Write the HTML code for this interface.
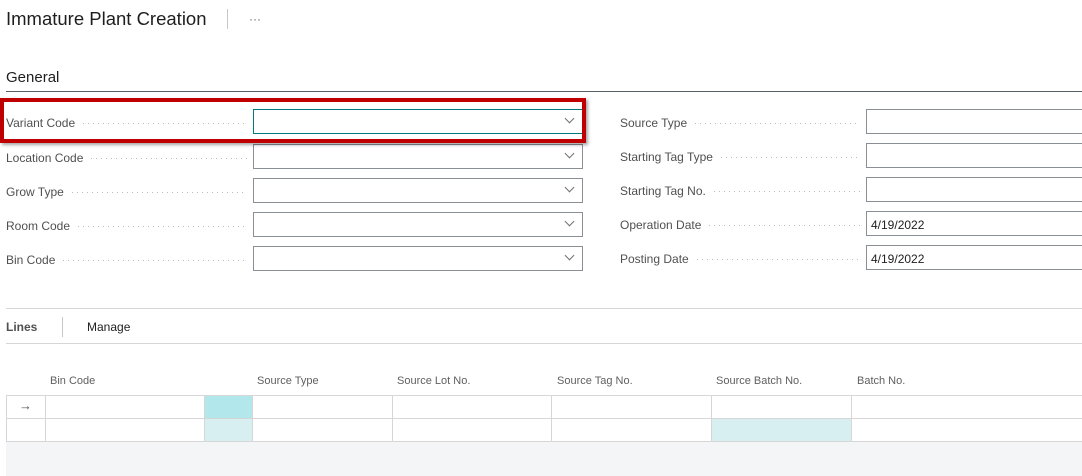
<!DOCTYPE html>
<html><head><meta charset="utf-8"><style>
*{box-sizing:border-box;margin:0;padding:0}
body{width:1082px;height:476px;overflow:hidden;background:#fff;font-family:"Liberation Sans",sans-serif;color:#212121;position:relative}
.a{position:absolute}
.title{left:6px;top:8px;font-size:18.5px;color:#1e1e1e}
.row{position:absolute;height:25px;display:flex;align-items:center;font-size:12px;color:#505050}
.row .lead{flex:1;margin:2px 6px 0 8px;height:1px;background-image:linear-gradient(to right,#bbb 1px,transparent 1px);background-size:5px 1px}
.inp{position:absolute;height:25px;border:1px solid #8a8f96;background:#fff;font-size:12px;color:#212121;padding:5px 0 0 4px}
.chev{position:absolute;right:9px;top:5px;width:7px;height:7px;border-right:1px solid #707070;border-bottom:1px solid #707070;transform:rotate(45deg)}
.th{position:absolute;top:375px;font-size:11px;color:#606060}
</style></head><body>
<div class="a title">Immature Plant Creation</div>
<div class="a" style="left:227px;top:9px;width:1px;height:20px;background:#c8c8c8"></div>
<div class="a" style="left:249px;top:12px;font-size:12px;color:#666">···</div>
<div class="a" style="left:6px;top:69px;font-size:15px;color:#1e1e1e">General</div>
<div class="a" style="left:6px;top:91px;width:1076px;height:1px;background:#5a5f66"></div>

<div class="row" style="left:6px;top:110px;width:247px">Variant Code<span class="lead"></span></div>
<div class="row" style="left:6px;top:145px;width:247px">Location Code<span class="lead"></span></div>
<div class="row" style="left:6px;top:179px;width:247px">Grow Type<span class="lead"></span></div>
<div class="row" style="left:6px;top:213px;width:247px">Room Code<span class="lead"></span></div>
<div class="row" style="left:6px;top:247px;width:247px">Bin Code<span class="lead"></span></div>
<div class="inp" style="left:253px;top:109px;width:330px;border-color:#007c80"><span class="chev"></span></div>
<div class="inp" style="left:253px;top:144px;width:330px"><span class="chev"></span></div>
<div class="inp" style="left:253px;top:178px;width:330px"><span class="chev"></span></div>
<div class="inp" style="left:253px;top:212px;width:330px"><span class="chev"></span></div>
<div class="inp" style="left:253px;top:246px;width:330px"><span class="chev"></span></div>
<div class="a" style="left:0;top:98px;width:586px;height:45px;border:4px solid #c00000;box-shadow:2px 2px 3px rgba(0,0,0,.35)"></div>

<div class="row" style="left:620px;top:110px;width:246px">Source Type<span class="lead"></span></div>
<div class="row" style="left:620px;top:144px;width:246px">Starting Tag Type<span class="lead"></span></div>
<div class="row" style="left:620px;top:178px;width:246px">Starting Tag No.<span class="lead"></span></div>
<div class="row" style="left:620px;top:212px;width:246px">Operation Date<span class="lead"></span></div>
<div class="row" style="left:620px;top:246px;width:246px">Posting Date<span class="lead"></span></div>
<div class="inp" style="left:866px;top:109px;width:230px"></div>
<div class="inp" style="left:866px;top:143px;width:230px"></div>
<div class="inp" style="left:866px;top:177px;width:230px"></div>
<div class="inp" style="left:866px;top:211px;width:230px;padding-top:6px">4/19/2022</div>
<div class="inp" style="left:866px;top:245px;width:230px;padding-top:6px">4/19/2022</div>

<div class="a" style="left:6px;top:308px;width:1076px;height:1px;background:#d6d6d6"></div>
<div class="a" style="left:6px;top:320px;font-size:12px;color:#505050;font-weight:bold">Lines</div>
<div class="a" style="left:62px;top:317px;width:1px;height:20px;background:#c8c8c8"></div>
<div class="a" style="left:87px;top:320px;font-size:12px;color:#212121">Manage</div>
<div class="a" style="left:6px;top:343px;width:1076px;height:1px;background:#d6d6d6"></div>

<div class="th" style="left:50px">Bin Code</div>
<div class="th" style="left:257px">Source Type</div>
<div class="th" style="left:397px">Source Lot No.</div>
<div class="th" style="left:557px">Source Tag No.</div>
<div class="th" style="left:716px">Source Batch No.</div>
<div class="th" style="left:857px">Batch No.</div>

<div class="a" style="left:6px;top:441px;width:1076px;height:35px;background:#f4f5f6"></div>
<div class="a" style="left:204px;top:396px;width:48px;height:22px;background:#b2e8eb"></div>
<div class="a" style="left:204px;top:419px;width:48px;height:22px;background:#d8eff1"></div>
<div class="a" style="left:711px;top:419px;width:140px;height:22px;background:#d8eff1"></div>
<div class="a" style="left:6px;top:395px;width:1076px;height:1px;background:#d6d6d6"></div>
<div class="a" style="left:6px;top:418px;width:1076px;height:1px;background:#d6d6d6"></div>
<div class="a" style="left:6px;top:441px;width:1076px;height:1px;background:#d6d6d6"></div>
<div class="a" style="left:6px;top:395px;width:1px;height:47px;background:#d6d6d6"></div>
<div class="a" style="left:45px;top:395px;width:1px;height:47px;background:#d6d6d6"></div>
<div class="a" style="left:204px;top:395px;width:1px;height:47px;background:#d6d6d6"></div>
<div class="a" style="left:252px;top:395px;width:1px;height:47px;background:#d6d6d6"></div>
<div class="a" style="left:392px;top:395px;width:1px;height:47px;background:#d6d6d6"></div>
<div class="a" style="left:551px;top:395px;width:1px;height:47px;background:#d6d6d6"></div>
<div class="a" style="left:711px;top:395px;width:1px;height:47px;background:#d6d6d6"></div>
<div class="a" style="left:851px;top:395px;width:1px;height:47px;background:#d6d6d6"></div>
<div class="a" style="left:19px;top:398px;font-size:13px;color:#555">→</div>
</body></html>
